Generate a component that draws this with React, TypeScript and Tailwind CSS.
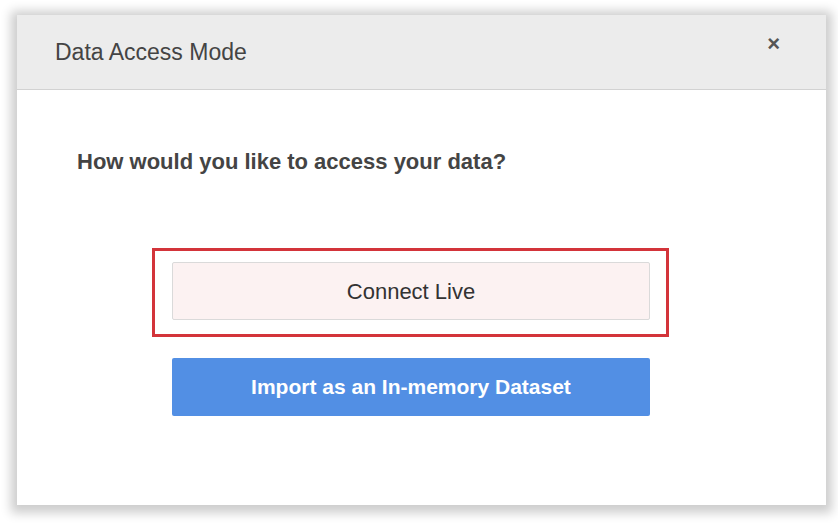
export default function App() {
  return (
    <div className="h-[524px] w-[838px] overflow-hidden bg-white pl-[17px] pt-[15px] font-['Liberation_Sans',Arial,sans-serif]">
      <div className="flex h-[490px] w-[809px] flex-col bg-white shadow-[0_2px_10px_6px_rgba(0,0,0,0.2)]">
        {/* Header */}
        <div className="relative flex h-[75px] shrink-0 items-center border-b border-[#d2d2d2] bg-[#ececec] pl-[38px]">
          <h1 className="text-[23px] leading-none text-[#444]">Data Access Mode</h1>
          <button className="absolute right-[46px] top-[18px] text-[22px] font-bold leading-none text-[#555]">
            ×
          </button>
        </div>

        {/* Body */}
        <div className="flex flex-col pl-[60px] pt-[59px]">
          <p className="text-[22px] font-bold leading-[26px] text-[#444]">
            How would you like to access your data?
          </p>

          <div className="ml-[75px] mt-[73px] w-[517px] border-[3px] border-[#d3343a] px-[17px] pb-[14px] pt-[11px]">
            <button className="flex h-[58px] w-[478px] items-center justify-center rounded-[2px] border border-[#dadada] bg-[#fcf2f2] text-[22px] text-[#333]">
              Connect Live
            </button>
          </div>

          <button className="ml-[95px] mt-[21px] flex h-[58px] w-[478px] items-center justify-center rounded-[2px] bg-[#528fe4] text-[21px] font-bold text-white">
            Import as an In-memory Dataset
          </button>
        </div>
      </div>
    </div>
  );
}
